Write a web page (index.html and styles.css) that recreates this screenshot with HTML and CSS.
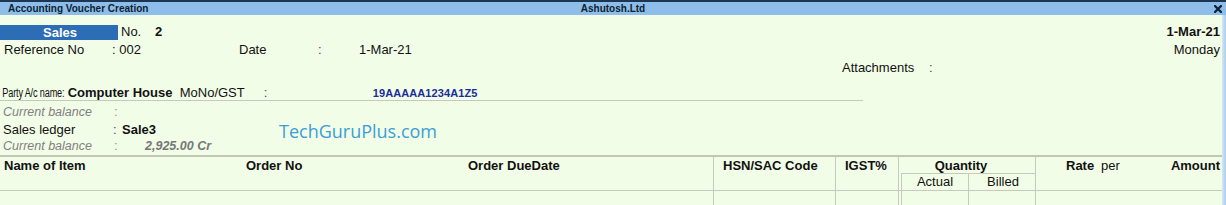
FILE: index.html
```html
<!DOCTYPE html>
<html>
<head>
<meta charset="utf-8">
<link rel="stylesheet" href="styles.css">
</head>
<body>
<div class="window">
  <div class="titlebar">
    <span class="t-left">Accounting Voucher Creation</span>
    <span class="t-center">Ashutosh.Ltd</span>
    <span class="t-close"><svg width="8" height="8" viewBox="0 0 8 8"><path d="M1 1 L7 7 M7 1 L1 7" stroke="#0e1e33" stroke-width="2.2" stroke-linecap="square"/></svg></span>
  </div>
  <div class="body">
    <div class="main">
      <div class="row row-a">
        <div class="group">
          <span class="vtype">Sales</span>
          <span class="no-label">No.</span>
          <span class="no-val">2</span>
        </div>
        <span class="rdate">1-Mar-21</span>
      </div>
      <div class="row row-b">
        <div class="group">
          <span class="lbl-ref">Reference No</span>
          <span class="val-ref">: 002</span>
          <span class="lbl-date">Date</span>
          <span class="col-date">:</span>
          <span>1-Mar-21</span>
        </div>
        <span class="rday">Monday</span>
      </div>
      <div class="row row-c">
        <span class="attach">Attachments</span><span class="attach-colon">:</span>
      </div>
      <div class="row row-d">
        <span class="party-label">Party A/c name:</span>
        <span class="party-name">Computer House</span>
        <span class="mono">MoNo/GST</span>
        <span class="mono-colon">:</span>
        <span class="gst">19AAAAA1234A1Z5</span>
      </div>
      <div class="row row-e">
        <span class="lbl-cb">Current balance</span><span class="cb-colon">:</span>
      </div>
      <div class="row row-f">
        <span class="lbl-sl">Sales ledger</span><span class="sl-colon">:</span><span class="sl-val">Sale3</span>
        <span class="brand">TechGuruPlus.com</span>
      </div>
      <div class="row row-g">
        <span class="lbl-cb">Current balance</span><span class="cb-colon">:</span><span class="cb-val">2,925.00 Cr</span>
      </div>
      <div class="table-head">
        <div class="h-name">
          <span class="hn1">Name of Item</span>
          <span class="hn2">Order No</span>
          <span class="hn3">Order DueDate</span>
        </div>
        <div class="h-hsn">HSN/SAC Code</div>
        <div class="h-igst">IGST%</div>
        <div class="h-qty">Quantity</div>
        <div class="h-gap"></div>
        <div class="h-act">Actual</div>
        <div class="h-bil">Billed</div>
        <div class="h-rate"><span class="rate-b">Rate</span><span class="per">per</span><span class="amt">Amount</span></div>
      </div>
      <div class="table-row">
        <div class="c"></div>
        <div class="c bl"></div>
        <div class="c bl"></div>
        <div class="c bl"></div>
        <div class="c bl"></div>
        <div class="c bl"></div>
        <div class="c bl"></div>
      </div>
    </div>
    <div class="strip"></div>
  </div>
</div>
</body>
</html>
```
FILE: styles.css
```css
* { box-sizing: border-box; }
html, body { margin: 0; padding: 0; }
body {
  width: 1226px;
  height: 205px;
  overflow: hidden;
  font-family: "Liberation Sans", Arial, sans-serif;
  font-size: 13px;
  color: #111;
  background: #f2fde8;
}
.window { width: 1226px; height: 205px; display: flex; flex-direction: column; }
.titlebar {
  height: 15px;
  border-top: 2px solid #1c3550;
  background: #8dbde8;
  display: flex;
  align-items: center;
  position: relative;
  font-size: 10px;
  font-weight: bold;
  color: #0e1e33;
  line-height: 13px;
}
.t-left { padding-left: 8px; }
.t-center { position: absolute; left: 0; right: 0; text-align: center; top: 0; pointer-events: none; }
.t-close { margin-left: auto; padding-right: 4px; display: flex; align-items: center; }
.body { flex: 1; display: flex; }
.main { width: 1222px; background: #f2fde8; }
.strip { width: 4px; background: linear-gradient(to right, #d6e9f2, #a9cdea); }

.row { display: flex; align-items: center; height: 16px; line-height: 16px; white-space: nowrap; }
.group { display: flex; align-items: center; }
.row-a { margin-top: 9px; justify-content: space-between; }
.vtype {
  width: 118px; height: 15px; line-height: 15px;
  background: #2d6db5; color: #fff; font-weight: bold; text-align: center;
  padding-left: 2px;
}
.no-label { margin-left: 3px; width: 34px; }
.no-val { font-weight: bold; }
.rdate { font-weight: bold; padding-right: 2px; }
.row-b { margin-top: 2px; justify-content: space-between; }
.lbl-ref { padding-left: 4px; width: 112px; }
.val-ref { width: 127px; }
.lbl-date { width: 79px; }
.col-date { width: 41px; color: #444; }
.rday { padding-right: 2px; }
.row-c { margin-top: 2px; padding-left: 842px; }
.attach { width: 87px; }
.attach-colon { color: #444; }
.row-d { margin-top: 9px; height: 16px; width: 863px; border-bottom: 1px solid #c6cabc; }
.party-label {
  display: inline-block; padding-left: 3px;
  font-size: 12px; transform: scaleX(0.76); transform-origin: left center;
  margin-right: -21px; letter-spacing: -0.2px;
}
.party-name { font-weight: bold; margin-left: 4px; width: 112px; }
.mono { width: 84px; }
.mono-colon { width: 109px; color: #444; }
.gst { color: #1b2d9c; font-weight: bold; font-size: 11px; letter-spacing: 0.1px; }
.row-e { margin-top: 3px; }
.lbl-cb { padding-left: 3px; width: 114px; font-style: italic; color: #808080; font-size: 12.5px; }
.cb-colon { color: #909090; width: 31px; }
.cb-val { font-style: italic; font-weight: bold; color: #777; font-size: 12.5px; }
.row-f { margin-top: 2px; }
.lbl-sl { padding-left: 3px; width: 113px; }
.sl-colon { width: 9px; color: #444; }
.sl-val { font-weight: bold; width: 157px; }
.brand { font-family: "Open Sans", sans-serif; font-size: 18px; color: #3a9fd6; position: relative; top: 1px; }
.row-g { margin-top: 0px; }

.table-head {
  margin-top: 1px;
  border-top: 2px solid #c2c6b8;
  border-bottom: 1px solid #c6cabc;
  display: grid;
  grid-template-columns: 713px 122px 63px 3px 67px 67px 187px;
  grid-template-rows: 16px 17px;
  font-weight: bold;
  line-height: 15px;
}
.h-name { grid-column: 1; grid-row: 1 / 3; display: flex; padding-left: 4px; padding-top: 1px; }
.hn1 { width: 242px; }
.hn2 { width: 222px; }
.h-hsn { grid-column: 2; grid-row: 1 / 3; border-left: 1px solid #c6cabc; padding-left: 9px; padding-top: 1px; }
.h-igst { grid-column: 3; grid-row: 1 / 3; border-left: 1px solid #c6cabc; padding-left: 9px; padding-top: 1px; }
.h-qty { grid-column: 4 / 7; grid-row: 1; border-left: 1px solid #c6cabc; text-align: center; padding-top: 1px; padding-right: 12px; }
.h-gap { grid-column: 4; grid-row: 2; border-left: 1px solid #c6cabc; }
.h-act, .h-bil { grid-row: 2; border-left: 1px solid #c6cabc; border-top: 1px solid #c6cabc; text-align: center; font-weight: normal; line-height: 16px; }
.h-act { grid-column: 5; }
.h-bil { grid-column: 6; padding-left: 2px; }
.h-rate { grid-column: 7; grid-row: 1 / 3; border-left: 1px solid #c6cabc; display: flex; padding-left: 30px; padding-right: 2px; padding-top: 1px; }
.rate-b { width: 35px; }
.per { font-weight: normal; }
.amt { margin-left: auto; }

.table-row {
  display: grid;
  grid-template-columns: 713px 122px 63px 3px 67px 67px 187px;
  height: 20px;
}
.c { height: 100%; }
.bl { border-left: 1px solid #c6cabc; }
```
